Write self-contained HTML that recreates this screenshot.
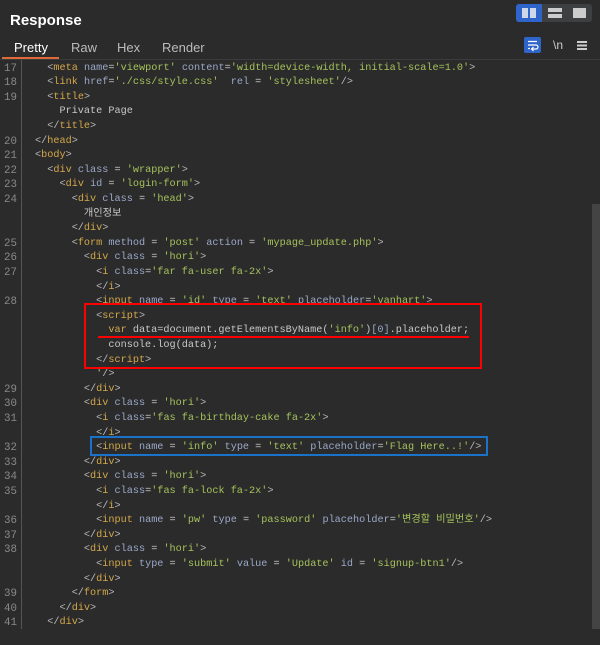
<!DOCTYPE html>
<html><head><meta charset="utf-8"><style>
body{margin:0;width:600px;height:629px;background:#2b2b2b;overflow:hidden;font-family:"Liberation Sans",sans-serif;position:relative}
.hdr{position:absolute;left:10px;top:12px;color:#fff;font-weight:bold;font-size:15px}
.tab{position:absolute;top:40px;font-size:13px;color:#bbb}
.ul{position:absolute;left:2px;top:57px;width:57px;height:2px;background:#e0693a}
.sep{position:absolute;left:0;top:59px;width:600px;height:1px;background:#3c3c3c}
.gut{position:absolute;left:21px;top:60px;width:1px;height:569px;background:#555}
.code{position:absolute;left:0;top:61.5px;font-family:"Liberation Mono","Noto Sans CJK KR",monospace;font-size:10.2px;line-height:14.6px;color:#c8c8c8;white-space:pre}
.ln{position:absolute;left:4px;color:#8a8a8a;font-size:10.8px}
.c{position:absolute;left:35px}
.t{color:#d4a84a}.a{color:#9aa8c8}.s{color:#a5c25c}.p{color:#bbbbbb}
.btns{position:absolute;left:516px;top:4px;width:76px;height:18px;background:#3d3f41;border-radius:3px}
.b1{position:absolute;left:516px;top:4px;width:26px;height:18px;background:#2f65ca;border-radius:3px 0 0 3px}
.sb{position:absolute;left:592px;top:204px;width:8px;height:425px;background:#444}
</style></head><body>
<div class="hdr">Response</div>
<div class="tab" style="left:14px;color:#fff">Pretty</div>
<div class="tab" style="left:71px">Raw</div>
<div class="tab" style="left:117px">Hex</div>
<div class="tab" style="left:162px">Render</div>
<div class="ul"></div><div class="sep"></div>
<div class="btns"></div><div class="b1"></div>
<div style="position:absolute;left:522px;top:8px;width:6px;height:10px;background:#cfd8e8"></div>
<div style="position:absolute;left:530px;top:8px;width:6px;height:10px;background:#cfd8e8"></div>
<div style="position:absolute;left:548px;top:8px;width:14px;height:4px;background:#ccc"></div>
<div style="position:absolute;left:548px;top:14px;width:14px;height:4px;background:#ccc"></div>
<div style="position:absolute;left:573px;top:8px;width:13px;height:10px;background:#ccc"></div>
<div style="position:absolute;left:524px;top:37px;width:17px;height:16px;background:#2f65ca;border-radius:2px"></div>
<svg style="position:absolute;left:524px;top:37px" width="17" height="16"><path d="M4 4.5h9M4 8h8a2 2 0 0 1 0 4h-4M9.5 10l-2 2 2 2M4 11.5h2" stroke="#fff" stroke-width="1.2" fill="none"/></svg>
<div style="position:absolute;left:553px;top:38px;color:#ccc;font-size:12px">\n</div>
<div style="position:absolute;left:577px;top:41px;width:10px;height:1.5px;background:#ccc;box-shadow:0 3.5px 0 #ccc,0 7px 0 #ccc"></div>
<div class="gut"></div>
<div class="sb"></div>
<div class="code">
<div class="ln" style="top:0">17</div><div class="c" style="top:0">  <span class="p">&lt;</span><span class="t">meta</span> <span class="a">name</span>=<span class="s">'viewport'</span> <span class="a">content</span>=<span class="s">'width=device-width, initial-scale=1.0'</span><span class="p">&gt;</span></div>
<div class="ln" style="top:14.6px">18</div><div class="c" style="top:14.6px">  <span class="p">&lt;</span><span class="t">link</span> <span class="a">href</span>=<span class="s">'./css/style.css'</span>  <span class="a">rel</span> = <span class="s">'stylesheet'</span><span class="p">/&gt;</span></div>
<div class="ln" style="top:29.2px">19</div><div class="c" style="top:29.2px">  <span class="p">&lt;</span><span class="t">title</span><span class="p">&gt;</span></div>
<div class="c" style="top:43.8px">    Private Page</div>
<div class="c" style="top:58.4px">  <span class="p">&lt;/</span><span class="t">title</span><span class="p">&gt;</span></div>
<div class="ln" style="top:73px">20</div><div class="c" style="top:73px"><span class="p">&lt;/</span><span class="t">head</span><span class="p">&gt;</span></div>
<div class="ln" style="top:87.6px">21</div><div class="c" style="top:87.6px"><span class="p">&lt;</span><span class="t">body</span><span class="p">&gt;</span></div>
<div class="ln" style="top:102.2px">22</div><div class="c" style="top:102.2px">  <span class="p">&lt;</span><span class="t">div</span> <span class="a">class</span> = <span class="s">'wrapper'</span><span class="p">&gt;</span></div>
<div class="ln" style="top:116.8px">23</div><div class="c" style="top:116.8px">    <span class="p">&lt;</span><span class="t">div</span> <span class="a">id</span> = <span class="s">'login-form'</span><span class="p">&gt;</span></div>
<div class="ln" style="top:131.4px">24</div><div class="c" style="top:131.4px">      <span class="p">&lt;</span><span class="t">div</span> <span class="a">class</span> = <span class="s">'head'</span><span class="p">&gt;</span></div>
<div class="c" style="top:146px">        개인정보</div>
<div class="c" style="top:160.6px">      <span class="p">&lt;/</span><span class="t">div</span><span class="p">&gt;</span></div>
<div class="ln" style="top:175.2px">25</div><div class="c" style="top:175.2px">      <span class="p">&lt;</span><span class="t">form</span> <span class="a">method</span> = <span class="s">'post'</span> <span class="a">action</span> = <span class="s">'mypage_update.php'</span><span class="p">&gt;</span></div>
<div class="ln" style="top:189.8px">26</div><div class="c" style="top:189.8px">        <span class="p">&lt;</span><span class="t">div</span> <span class="a">class</span> = <span class="s">'hori'</span><span class="p">&gt;</span></div>
<div class="ln" style="top:204.4px">27</div><div class="c" style="top:204.4px">          <span class="p">&lt;</span><span class="t">i</span> <span class="a">class</span>=<span class="s">'far fa-user fa-2x'</span><span class="p">&gt;</span></div>
<div class="c" style="top:219px">          <span class="p">&lt;/</span><span class="t">i</span><span class="p">&gt;</span></div>
<div class="ln" style="top:233.6px">28</div><div class="c" style="top:233.6px">          <span class="p">&lt;</span><span class="t">input</span> <span class="a">name</span> = <span class="s">'id'</span> <span class="a">type</span> = <span class="s">'text'</span> <span class="a">placeholder</span>=<span class="s">'vanhart'</span><span class="p">&gt;</span></div>
<div class="c" style="top:248.2px">          <span class="p">&lt;</span><span class="t">script</span><span class="p">&gt;</span></div>
<div class="c" style="top:262.8px">            <span class="t">var</span> data=document.getElementsByName(<span class="s">'info'</span>)<span class="a">[0]</span>.placeholder;</div>
<div class="c" style="top:277.4px">            console.log(data);</div>
<div class="c" style="top:292px">          <span class="p">&lt;/</span><span class="t">script</span><span class="p">&gt;</span></div>
<div class="c" style="top:306.6px">          <span class="s">'</span><span class="p">/&gt;</span></div>
<div class="ln" style="top:321.2px">29</div><div class="c" style="top:321.2px">        <span class="p">&lt;/</span><span class="t">div</span><span class="p">&gt;</span></div>
<div class="ln" style="top:335.8px">30</div><div class="c" style="top:335.8px">        <span class="p">&lt;</span><span class="t">div</span> <span class="a">class</span> = <span class="s">'hori'</span><span class="p">&gt;</span></div>
<div class="ln" style="top:350.4px">31</div><div class="c" style="top:350.4px">          <span class="p">&lt;</span><span class="t">i</span> <span class="a">class</span>=<span class="s">'fas fa-birthday-cake fa-2x'</span><span class="p">&gt;</span></div>
<div class="c" style="top:365px">          <span class="p">&lt;/</span><span class="t">i</span><span class="p">&gt;</span></div>
<div class="ln" style="top:379.6px">32</div><div class="c" style="top:379.6px">          <span class="p">&lt;</span><span class="t">input</span> <span class="a">name</span> = <span class="s">'info'</span> <span class="a">type</span> = <span class="s">'text'</span> <span class="a">placeholder</span>=<span class="s">'Flag Here..!'</span><span class="p">/&gt;</span></div>
<div class="ln" style="top:394.2px">33</div><div class="c" style="top:394.2px">        <span class="p">&lt;/</span><span class="t">div</span><span class="p">&gt;</span></div>
<div class="ln" style="top:408.8px">34</div><div class="c" style="top:408.8px">        <span class="p">&lt;</span><span class="t">div</span> <span class="a">class</span> = <span class="s">'hori'</span><span class="p">&gt;</span></div>
<div class="ln" style="top:423.4px">35</div><div class="c" style="top:423.4px">          <span class="p">&lt;</span><span class="t">i</span> <span class="a">class</span>=<span class="s">'fas fa-lock fa-2x'</span><span class="p">&gt;</span></div>
<div class="c" style="top:438px">          <span class="p">&lt;/</span><span class="t">i</span><span class="p">&gt;</span></div>
<div class="ln" style="top:452.6px">36</div><div class="c" style="top:452.6px">          <span class="p">&lt;</span><span class="t">input</span> <span class="a">name</span> = <span class="s">'pw'</span> <span class="a">type</span> = <span class="s">'password'</span> <span class="a">placeholder</span>=<span class="s">'변경할 비밀번호'</span><span class="p">/&gt;</span></div>
<div class="ln" style="top:467.2px">37</div><div class="c" style="top:467.2px">        <span class="p">&lt;/</span><span class="t">div</span><span class="p">&gt;</span></div>
<div class="ln" style="top:481.8px">38</div><div class="c" style="top:481.8px">        <span class="p">&lt;</span><span class="t">div</span> <span class="a">class</span> = <span class="s">'hori'</span><span class="p">&gt;</span></div>
<div class="c" style="top:496.4px">          <span class="p">&lt;</span><span class="t">input</span> <span class="a">type</span> = <span class="s">'submit'</span> <span class="a">value</span> = <span class="s">'Update'</span> <span class="a">id</span> = <span class="s">'signup-btn1'</span><span class="p">/&gt;</span></div>
<div class="c" style="top:511px">        <span class="p">&lt;/</span><span class="t">div</span><span class="p">&gt;</span></div>
<div class="ln" style="top:525.6px">39</div><div class="c" style="top:525.6px">      <span class="p">&lt;/</span><span class="t">form</span><span class="p">&gt;</span></div>
<div class="ln" style="top:540.2px">40</div><div class="c" style="top:540.2px">    <span class="p">&lt;/</span><span class="t">div</span><span class="p">&gt;</span></div>
<div class="ln" style="top:554.8px">41</div><div class="c" style="top:554.8px">  <span class="p">&lt;/</span><span class="t">div</span><span class="p">&gt;</span></div>
</div>
<div style="position:absolute;left:84px;top:303px;width:394px;height:62px;border:2px solid #f00"></div>
<div style="position:absolute;left:98px;top:336px;width:371px;height:2px;background:#f00"></div>
<div style="position:absolute;left:90px;top:436px;width:394px;height:16px;border:2px solid #1a73c8"></div>
</body></html>
